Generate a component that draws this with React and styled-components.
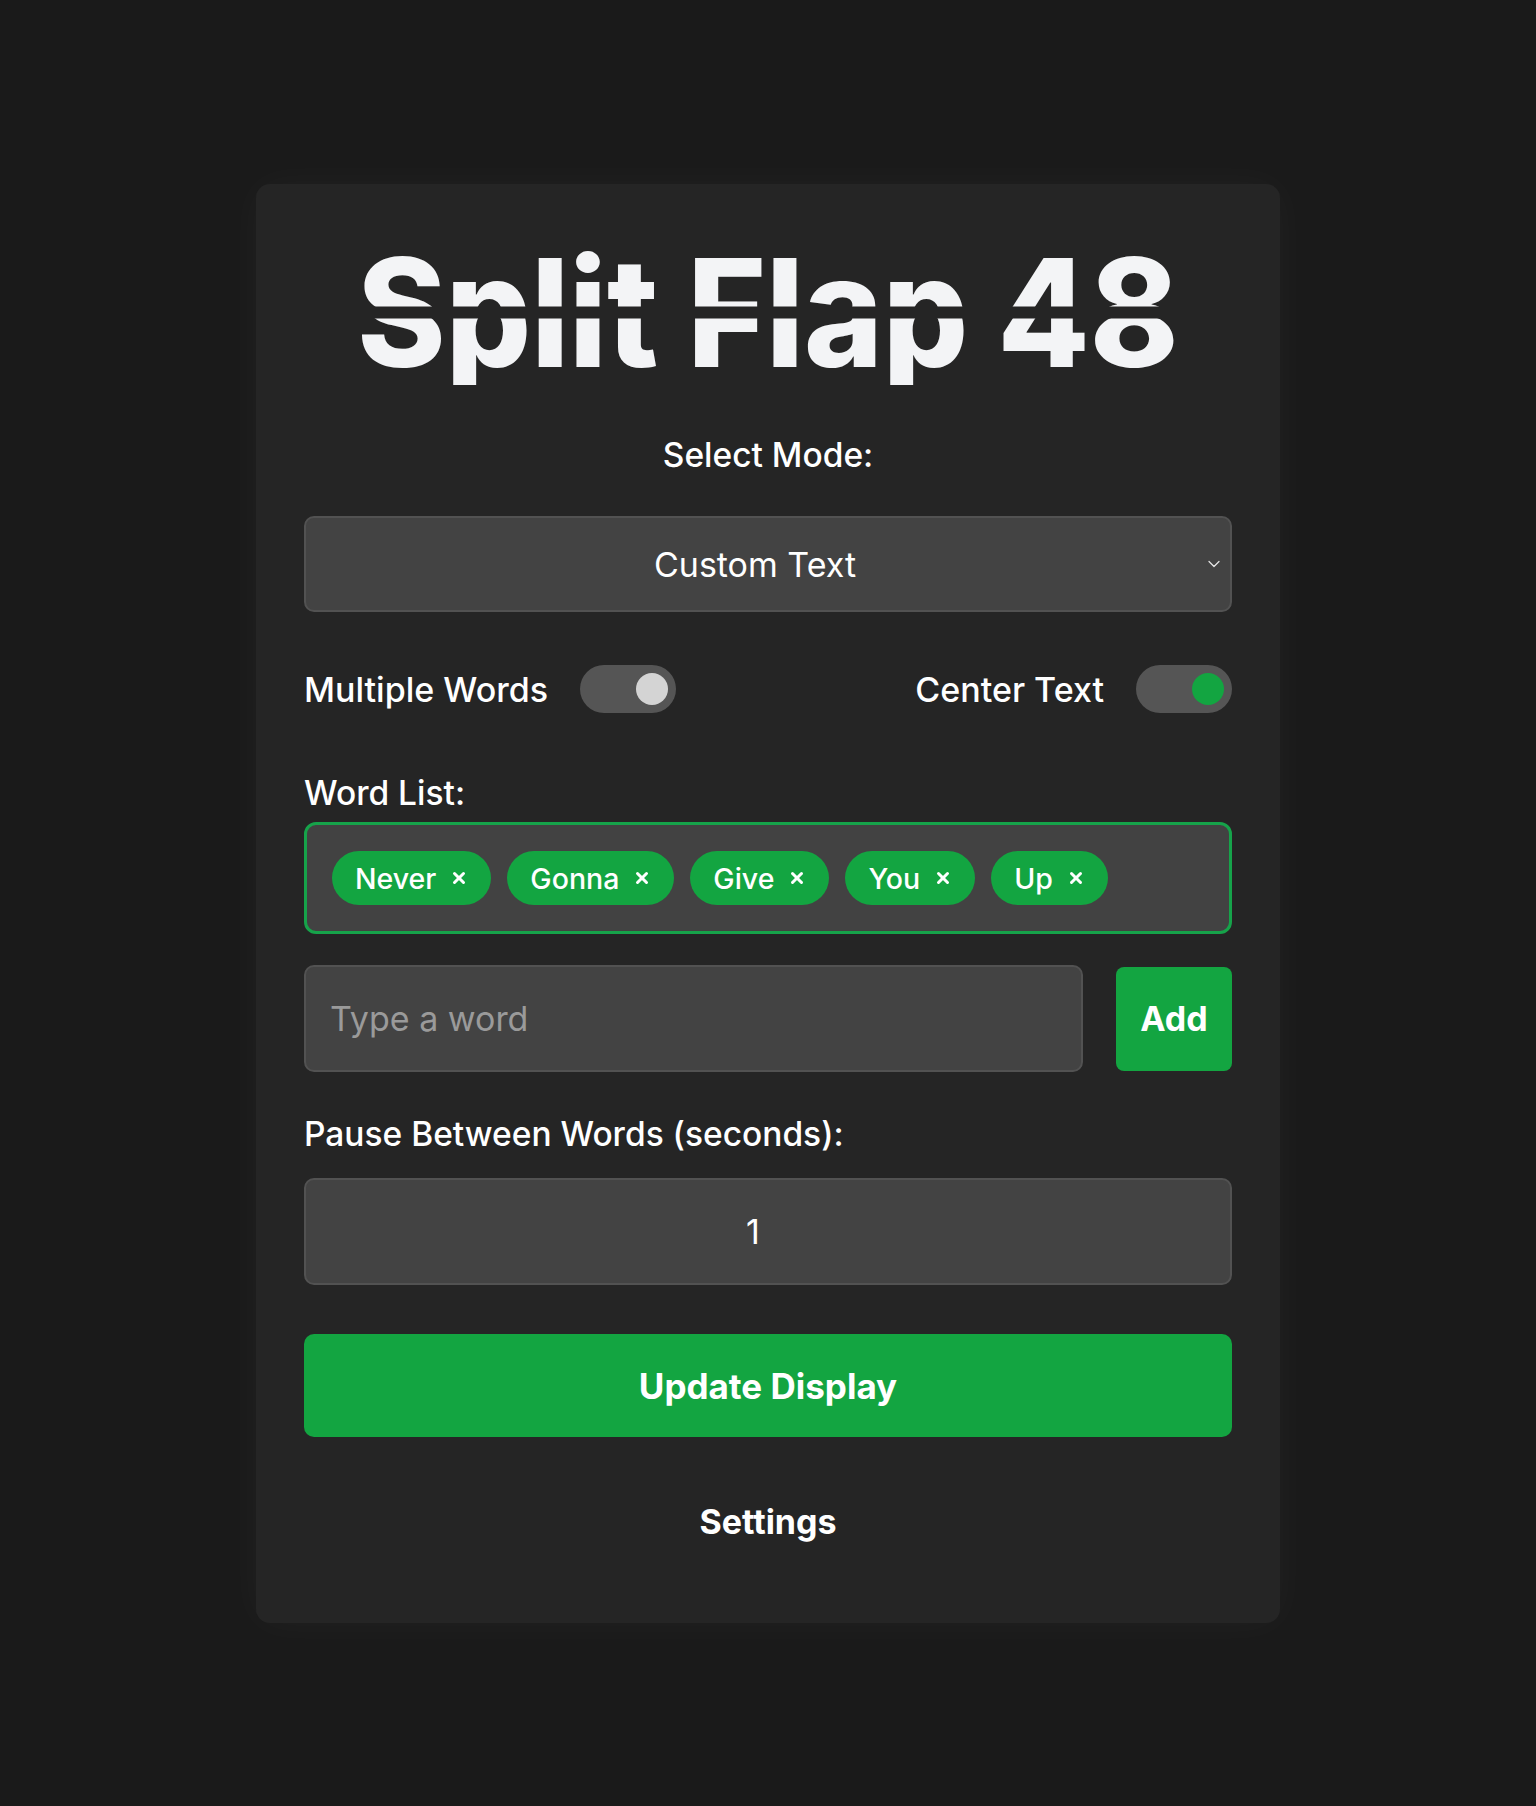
import styled, { createGlobalStyle } from 'styled-components'
import { ChevronDown, X } from 'lucide-react'

const GlobalStyle = createGlobalStyle`
    html, body {
        margin: 0;
        padding: 0;
        background: #1a1a1a;
    }
    * {
        box-sizing: border-box;
    }
`

const Page = styled.div`
    min-height: 1806px;
    display: flex;
    justify-content: center;
    align-items: flex-start;
    padding-top: 184px;
    font-family: Inter, 'Noto Sans', sans-serif;
    color: #fff;
`

const Card = styled.div`
    width: 1024px;
    background: #252525;
    border-radius: 14px;
    box-shadow: 0 0 40px rgba(255, 255, 255, 0.035);
    padding: 62px 48px 81px;
    display: flex;
    flex-direction: column;
`

// the visible title is drawn twice by the pseudo elements, split in two flaps
const Title = styled.h1`
    position: relative;
    margin: 0;
    height: 133px;
    font-size: 134px;
    line-height: 133px;
    font-weight: 800;
    letter-spacing: 0;
    text-align: center;
    color: transparent;

    &::before,
    &::after {
        content: attr(data-text);
        position: absolute;
        left: 0;
        right: 0;
        top: 0;
        color: #f3f4f6;
    }
    &::before {
        clip-path: inset(0 0 50% 0);
        transform: translateY(-6px);
    }
    &::after {
        clip-path: inset(50% 0 0 0);
        transform: translateY(6px);
    }
`

const Label = styled.div`
    font-size: 33.5px;
    line-height: 40px;
    font-weight: 500;
    text-align: ${(p) => (p.$center ? 'center' : 'left')};
    margin-top: ${(p) => p.$mt || 0}px;
    margin-bottom: ${(p) => p.$mb || 0}px;
`

const SelectWrap = styled.div`
    position: relative;
    height: 96px;
`

const Select = styled.select`
    appearance: none;
    width: 100%;
    height: 100%;
    background: #434343;
    border: 2px solid #525252;
    border-radius: 10px;
    color: #fff;
    font-family: inherit;
    font-size: 34px;
    text-align: center;
    text-align-last: center;
    padding: 0 26px 0 0;
    outline: none;
`

const Chevron = styled(ChevronDown)`
    position: absolute;
    right: 8px;
    top: 50%;
    transform: translateY(-50%);
    pointer-events: none;
`

const ToggleRow = styled.div`
    display: flex;
    justify-content: space-between;
    align-items: center;
    margin-top: 53px;
`

const ToggleGroup = styled.div`
    display: flex;
    align-items: center;
    gap: 32px;
`

const ToggleLabel = styled.span`
    font-size: 34px;
    font-weight: 500;
`

const Switch = styled.div`
    width: 96px;
    height: 48px;
    border-radius: 24px;
    background: #555;
    display: flex;
    align-items: center;
    justify-content: flex-end;
    padding: 0 8px;
`

const Knob = styled.div`
    width: 32px;
    height: 32px;
    border-radius: 50%;
    background: ${(p) => (p.$on ? '#13a541' : '#d4d4d4')};
`

const WordBox = styled.div`
    border: 3px solid #16a34a;
    border-radius: 12px;
    background: #424242;
    padding: 26px 25px;
    display: flex;
    flex-wrap: wrap;
    gap: 16px;
`

const Chip = styled.div`
    height: 54px;
    border-radius: 27px;
    background: #13a541;
    display: flex;
    align-items: center;
    gap: 14px;
    padding: 0 23px;
    font-size: 28.5px;
    font-weight: 500;
    color: #fff;
`

const InputRow = styled.div`
    display: flex;
    gap: 33px;
    margin-top: 31px;
    height: 107px;
`

const TextInput = styled.input`
    flex: 1;
    min-width: 0;
    height: 100%;
    background: #434343;
    border: 2px solid #525252;
    border-radius: 10px;
    color: #fff;
    font-family: inherit;
    font-size: 34px;
    padding: ${(p) => (p.$center ? '0 54px 0 24px' : '0 24px')};
    text-align: ${(p) => (p.$center ? 'center' : 'left')};
    outline: none;

    &::placeholder {
        color: #9a9a9a;
    }
`

const NumberWrap = styled.div`
    height: 107px;
    display: flex;
`

const AddButton = styled.button`
    width: 116px;
    height: 104px;
    align-self: center;
    border: none;
    border-radius: 8px;
    background: #13a541;
    color: #fff;
    font-family: inherit;
    font-size: 34px;
    font-weight: 700;
`

const UpdateButton = styled.button`
    height: 103px;
    margin-top: 49px;
    border: none;
    border-radius: 10px;
    background: #13a541;
    color: #fff;
    font-family: inherit;
    font-size: 35px;
    font-weight: 700;
`

const SettingsLink = styled.div`
    margin-top: 65px;
    font-size: 34px;
    line-height: 40px;
    font-weight: 700;
    text-align: center;
`

const words = ['Never', 'Gonna', 'Give', 'You', 'Up']

const App = () => {
    return (
        <>
            <GlobalStyle />
            <Page>
                <Card>
                    <Title data-text="Split Flap 48">Split Flap 48</Title>

                    <Label $center $mt={56} $mb={41}>
                        Select Mode:
                    </Label>
                    <SelectWrap>
                        <Select defaultValue="custom">
                            <option value="custom">Custom Text</option>
                            <option value="clock">Clock</option>
                        </Select>
                        <Chevron size={20} strokeWidth={1.5} color="#e5e5e5" />
                    </SelectWrap>

                    <ToggleRow>
                        <ToggleGroup>
                            <ToggleLabel>Multiple Words</ToggleLabel>
                            <Switch>
                                <Knob />
                            </Switch>
                        </ToggleGroup>
                        <ToggleGroup>
                            <ToggleLabel>Center Text</ToggleLabel>
                            <Switch>
                                <Knob $on />
                            </Switch>
                        </ToggleGroup>
                    </ToggleRow>

                    <Label $mt={60} $mb={9}>
                        Word List:
                    </Label>
                    <WordBox>
                        {words.map((w) => (
                            <Chip key={w}>
                                {w}
                                <X size={18} strokeWidth={4} />
                            </Chip>
                        ))}
                    </WordBox>

                    <InputRow>
                        <TextInput placeholder="Type a word" />
                        <AddButton>Add</AddButton>
                    </InputRow>

                    <Label $mt={42} $mb={24}>
                        Pause Between Words (seconds):
                    </Label>
                    <NumberWrap>
                        <TextInput $center defaultValue="1" />
                    </NumberWrap>

                    <UpdateButton>Update Display</UpdateButton>
                    <SettingsLink>Settings</SettingsLink>
                </Card>
            </Page>
        </>
    )
}

export default App
